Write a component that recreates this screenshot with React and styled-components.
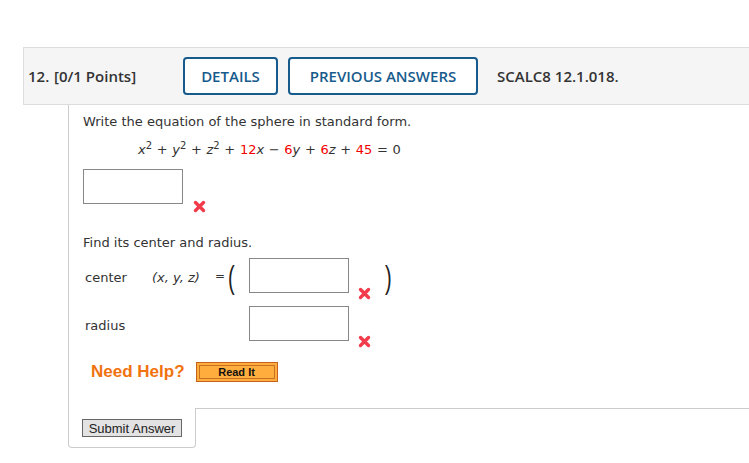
import React from 'react';
import styled, { createGlobalStyle } from 'styled-components';

const GlobalStyle = createGlobalStyle`
	body {
		margin: 0;
		background: #fff;
		font-family: "DejaVu Sans", Verdana, sans-serif;
		color: #333;
	}
`;

const Page = styled.div`
	padding-top: 47px;
	padding-left: 23px;
	width: 749px;
	box-sizing: border-box;
`;

const Header = styled.div`
	display: flex;
	align-items: center;
	height: 58px;
	box-sizing: border-box;
	padding-left: 4px;
	background: #f5f5f5;
	border: 1px solid #ddd;
	border-right: none;
	font-family: "Open Sans", sans-serif;
	font-size: 15px;
	font-weight: 600;
	color: #333;
`;

const Number = styled.span`
	width: 26px;
`;

const Points = styled.span`
	width: 129px;
`;

const TabButton = styled.button`
	height: 38px;
	width: ${(p) => p.$width}px;
	margin-right: ${(p) => p.$gap}px;
	box-sizing: border-box;
	background: #fff;
	border: 2px solid #175b8c;
	border-radius: 4px;
	color: #175b8c;
	font-family: "Open Sans", sans-serif;
	font-size: 15px;
	font-weight: 600;
	padding: 0;
`;

const Card = styled.div`
	margin-left: 45px;
`;

const Content = styled.div`
	border-left: 1px solid #ccc;
	padding: 9px 0 26px 14px;
	font-size: 13px;
	line-height: 16px;
`;

const Prompt = styled.div`
	margin-top: ${(p) => p.$top || 0}px;
`;

const Equation = styled.div`
	margin-top: 12px;
	padding-left: 55px;
	word-spacing: 0.5px;

	i {
		font-style: italic;
	}

	sup {
		font-size: 10px;
		line-height: 0;
		vertical-align: 5px;
	}
`;

const Red = styled.span`
	color: #f20000;
`;

const AnswerRow = styled.div`
	display: flex;
	align-items: flex-start;
	margin-top: 11px;
`;

const Box = styled.input`
	width: 100px;
	height: 35px;
	box-sizing: border-box;
	border: 1px solid #888;
	margin: 0;
	padding: 0 4px;
	background: #fff;
`;

const Mark = styled.svg`
	display: block;
	margin-top: ${(p) => p.$top}px;
	margin-left: ${(p) => p.$left}px;
`;

const Grid = styled.div`
	display: grid;
	grid-template-columns: 67px 62px 12px 23px 100px 36px 12px;
	grid-auto-rows: 48px;
	margin-top: 7px;
	padding-left: 2px;
`;

const Label = styled.div`
	padding-top: 12px;
`;

const Coord = styled.div`
	padding-top: 12px;
	font-style: italic;
`;

const Equals = styled.div`
	padding-top: 10px;
	font-size: 12px;
	text-align: center;
`;

const Paren = styled.div`
	font-family: "Liberation Sans", Arial, sans-serif;
	font-size: 20px;
	line-height: 20px;
	padding-top: 2px;
	transform: scaleY(1.6);
	transform-origin: top;
	color: #222;
	padding-left: ${(p) => p.$left || 0}px;
`;

const HelpRow = styled.div`
	display: flex;
	align-items: center;
	margin-top: 8px;
	padding-left: 8px;
`;

const NeedHelp = styled.span`
	font-family: "Liberation Sans", Arial, sans-serif;
	font-weight: 700;
	font-size: 17px;
	color: #f0730f;
	margin-right: 11px;
`;

const ReadIt = styled.button`
	width: 82px;
	height: 20px;
	box-sizing: border-box;
	padding: 0;
	border: 1px solid #c6621c;
	background: #ffad3c;
	box-shadow: inset 0 0 0 2px #ffad3c, inset 0 0 0 3px #c8701f;
	font-family: "Liberation Sans", Arial, sans-serif;
	font-weight: 700;
	font-size: 11px;
	color: #111;
`;

const Footer = styled.div`
	display: flex;
`;

const SubmitBox = styled.div`
	width: 128px;
	box-sizing: border-box;
	padding: 11px 0 10px 13px;
	border: 1px solid #ccc;
	border-top: none;
	border-radius: 0 0 4px 4px;
`;

const Submit = styled.button`
	display: block;
	width: 100px;
	height: 18px;
	box-sizing: border-box;
	padding: 0;
	background: #e3e3e3;
	border: 1px solid #666;
	font-family: "Liberation Sans", Arial, sans-serif;
	font-size: 13px;
	color: #222;
`;

const Filler = styled.div`
	flex: 1;
	border-top: 1px solid #ccc;
`;

function Wrong({ top = 0, left = 0 }) {
	return (
		<Mark width="13" height="13" viewBox="0 0 13 13" $top={top} $left={left}>
			<path d="M2.5 2.5 L10.5 10.5 M10.5 2.5 L2.5 10.5" stroke="#f23b4b" strokeWidth="3.4" strokeLinecap="round" />
		</Mark>
	);
}

export default function App() {
	return (
		<>
			<GlobalStyle />
			<Page>
				<Header>
					<Number>12.</Number>
					<Points>[0/1 Points]</Points>
					<TabButton $width={95} $gap={10}>DETAILS</TabButton>
					<TabButton $width={190} $gap={19}>PREVIOUS ANSWERS</TabButton>
					<span>SCALC8 12.1.018.</span>
				</Header>
				<Card>
					<Content>
						<Prompt>Write the equation of the sphere in standard form.</Prompt>
						<Equation>
							<i>x</i><sup>2</sup> + <i>y</i><sup>2</sup> + <i>z</i><sup>2</sup> + <Red>12</Red><i>x</i> − <Red>6</Red><i>y</i> + <Red>6</Red><i>z</i> + <Red>45</Red> = 0
						</Equation>
						<AnswerRow>
							<Box />
							<Wrong top={31} left={10} />
						</AnswerRow>
						<Prompt $top={22}>Find its center and radius.</Prompt>
						<Grid>
							<Label>center</Label>
							<Coord>(x, y, z)</Coord>
							<Equals>=</Equals>
							<Paren $left={2}>(</Paren>
							<Box />
							<Wrong top={29} left={9} />
							<Paren>)</Paren>

							<Label>radius</Label>
							<div />
							<div />
							<div />
							<Box />
							<Wrong top={29} left={9} />
							<div />
						</Grid>
						<HelpRow>
							<NeedHelp>Need Help?</NeedHelp>
							<ReadIt>Read It</ReadIt>
						</HelpRow>
					</Content>
					<Footer>
						<SubmitBox>
							<Submit>Submit Answer</Submit>
						</SubmitBox>
						<Filler />
					</Footer>
				</Card>
			</Page>
		</>
	);
}
